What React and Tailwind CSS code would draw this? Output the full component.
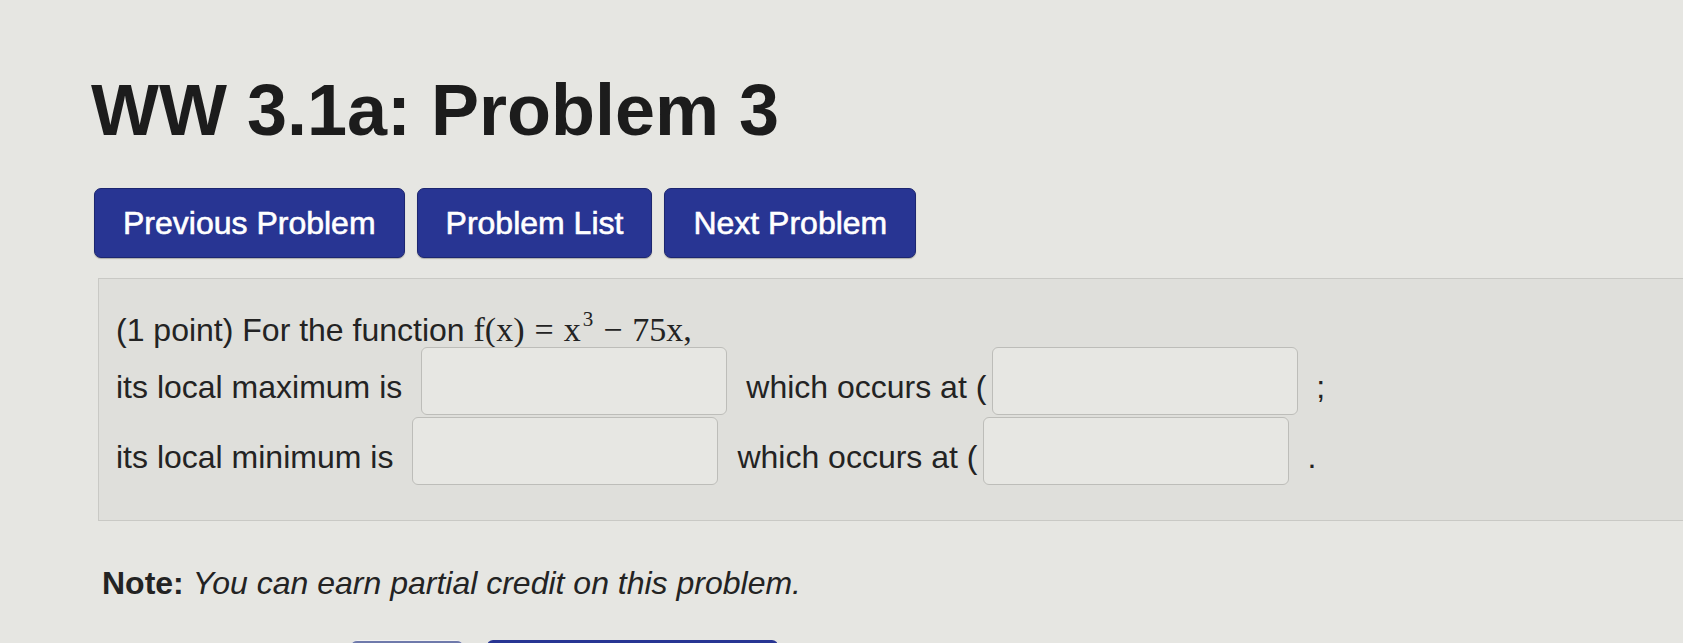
const sans = { fontFamily: '"Liberation Sans", Arial, sans-serif' };

function NavButton({ children }) {
  return (
    <button className="h-[70px] px-7 rounded-[7px] bg-[#283593] border border-[#1c2670] text-white text-[32px] leading-none shadow-[0_1px_1px_rgba(0,0,0,0.25)] [-webkit-text-stroke:0.6px_#fff]">
      {children}
    </button>
  );
}

function AnswerBox() {
  return <div className="w-[306px] h-[68px] shrink-0 rounded-[6px] border border-[#bdbdb9] bg-[#e7e7e3]" />;
}

function Label({ children, className = '' }) {
  return <span className={`mt-[21px] leading-[38px] whitespace-nowrap ${className}`}>{children}</span>;
}

export default function App() {
  return (
    <div className="h-[643px] bg-[#e6e6e2] overflow-hidden text-[#232323]" style={sans}>
      <div className="pl-[94px] pt-[74px]">
        {/* title */}
        <h1 className="text-[72px] font-bold leading-none text-[#1c1c1c] -ml-[3px]">WW 3.1a: Problem 3</h1>

        {/* nav */}
        <div className="flex gap-3 mt-[42px]">
          <NavButton>Previous Problem</NavButton>
          <NavButton>Problem List</NavButton>
          <NavButton>Next Problem</NavButton>
        </div>

        {/* problem body */}
        <div className="mt-[20px] ml-[4px] -mr-[20px] border border-[#c9c9c5] bg-[#dfdfdb] pl-[17px] pt-[32px] pb-[35px] text-[32px]">
          <div className="leading-[38px] whitespace-nowrap">
            (1 point) For the function{' '}
            <span className="text-[34px]" style={{ fontFamily: '"Liberation Serif", "Times New Roman", serif' }}>
              f(x)
              <span className="mx-[10px]">=</span>
              x<sup className="text-[21px] ml-[2px] relative -top-[15px]">3</sup>
              <span className="mx-[10px]">−</span>
              75x,
            </span>
          </div>

          <div className="flex items-start mt-[-2px]">
            <Label>its local maximum is</Label>
            <div className="ml-[19px]"><AnswerBox /></div>
            <Label className="ml-[19px]">which occurs at (</Label>
            <div className="ml-[6px]"><AnswerBox /></div>
            <Label className="ml-[18px]">;</Label>
          </div>

          <div className="flex items-start mt-[2px]">
            <Label>its local minimum is</Label>
            <div className="ml-[19px]"><AnswerBox /></div>
            <Label className="ml-[19px]">which occurs at (</Label>
            <div className="ml-[6px]"><AnswerBox /></div>
            <Label className="ml-[18px]">.</Label>
          </div>
        </div>

        {/* note */}
        <p className="mt-[43px] ml-[8px] text-[32px] leading-[38px]">
          <b>Note:</b> <i>You can earn partial credit on this problem.</i>
        </p>

        {/* submit buttons, cut off by the bottom edge */}
        <div className="flex gap-6 mt-[38px] ml-[257px]">
          <div className="w-[112px] h-[8px] rounded-t-[6px] bg-[#6f7aab] border-t border-[#f2f2f2]" />
          <div className="w-[291px] h-[8px] rounded-t-[6px] bg-[#283593]" />
        </div>
      </div>
    </div>
  );
}
